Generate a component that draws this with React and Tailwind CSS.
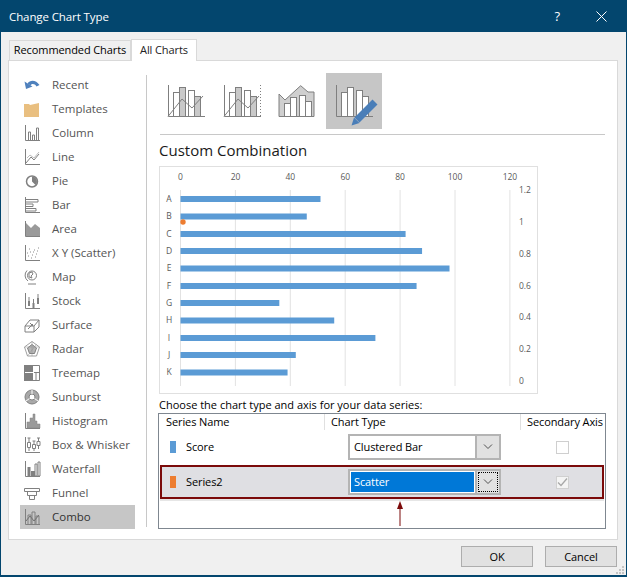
const axis = <path d="M1.5 0v15.5H16" fill="none" stroke="#808080" />;

const navItems = [
  {
    name: "Recent",
    icon: (
      <>
        <path d="M3.500 6.500C6 2.500 12 2.500 15.500 8l-3 1.500C10.500 6.500 8 6.500 6.500 8.500z" fill="#4f81bd" />
        <path d="M0.500 4.500l1.500 7.500 6.500-2.500z" fill="#4f81bd" />
      </>
    ),
  },
  {
    name: "Templates",
    icon: <path d="M0 3h5l1 1 9-2v14H0z" fill="#e9bf80" />,
  },
  {
    name: "Column",
    icon: (
      <>
        {axis}
        <path d="M4.500 15V7h2v8M8.500 15v-5h2v5M12.500 15V3h2v12" fill="none" stroke="#808080" />
      </>
    ),
  },
  {
    name: "Line",
    icon: (
      <>
        {axis}
        <path d="M2 14l5-6 3 3 5-6" fill="none" stroke="#808080" />
        <path d="M3 9l3-3 4 3 5-6" fill="none" stroke="#bdbdbd" />
      </>
    ),
  },
  {
    name: "Pie",
    icon: (
      <>
        <circle cx="8" cy="8.500" r="5.500" fill="none" stroke="#808080" strokeWidth="1.500" />
        <path d="M8 3.500v5l3.500 3.500a5 5 0 0 0-3.500-8.500z" fill="#808080" />
      </>
    ),
  },
  {
    name: "Bar",
    icon: (
      <>
        {axis}
        <path d="M2 2.500h12v2.500H2M2 7h7v2.500H2M2 11.500h10V14H2" fill="none" stroke="#808080" />
      </>
    ),
  },
  {
    name: "Area",
    icon: (
      <>
        {axis}
        <path d="M2 2l5 5 4-4 5 4v8H2z" fill="#9a9a9a" />
      </>
    ),
  },
  {
    name: "X Y (Scatter)",
    icon: (
      <>
        {axis}
        <path
          d="M4 11h1M6 7h1M8 10h1M10 5h1M12 9h1M14 3h1M7 13h1M11 12h1M5 4h1M13 6h1M9 7h1M3 8h1"
          stroke="#8a8a8a"
        />
      </>
    ),
  },
  {
    name: "Map",
    icon: (
      <>
        <circle cx="8" cy="6.500" r="4.500" fill="none" stroke="#808080" />
        <path d="M5 4l3-1 1 2-2 2 1 2-3-1zM3 1.500a7 7 0 0 0 1 10.500M4 15h8" fill="none" stroke="#808080" />
      </>
    ),
  },
  {
    name: "Stock",
    icon: (
      <>
        {axis}
        <path d="M5 4v8M9.500 6v9M14 1v10" stroke="#808080" />
        <path d="M4 8h2v5H4zM8.500 10h2v5h-2zM13 5h2v6h-2z" fill="#808080" />
      </>
    ),
  },
  {
    name: "Surface",
    icon: (
      <>
        <path d="M1 9l5-6h9v7l-5 5H1z" fill="none" stroke="#808080" />
        <path d="M1 9h9l5-6M10 9v6M4 12l5-5M6 6l3 3" fill="none" stroke="#808080" />
      </>
    ),
  },
  {
    name: "Radar",
    icon: (
      <>
        <path d="M8 0.500l7.500 5.500-3 9h-9l-3-9z" fill="none" stroke="#a0a0a0" />
        <path d="M8 3.500l4.500 3.500-2 5.500h-5L3.500 7z" fill="#b5b5b5" stroke="#808080" />
        <path d="M8 0.500V15M0.500 6l15 0M3.500 15L12.500 3" stroke="#909090" strokeWidth="0.500" />
      </>
    ),
  },
  {
    name: "Treemap",
    icon: (
      <>
        <path d="M0.500 0.500h15v15H0.500z" fill="none" stroke="#808080" />
        <path d="M0 0h9v7H0zM0 8h9v8H0z" fill="#808080" />
        <path d="M10 7.500h5M12 7.500V15" stroke="#808080" />
      </>
    ),
  },
  {
    name: "Sunburst",
    icon: (
      <>
        <circle cx="8" cy="8" r="7" fill="#a8a8a8" stroke="#808080" />
        <circle cx="8" cy="8" r="3" fill="#fff" stroke="#808080" />
        <path d="M8 1v4M2 12l3.500-2.500M14 12l-3.500-2.500" stroke="#fff" />
      </>
    ),
  },
  {
    name: "Histogram",
    icon: (
      <>
        {axis}
        <path d="M3 15V9h3V5h3V1h2v7h2v3h3v4z" fill="#9a9a9a" stroke="#808080" strokeWidth="0.500" />
      </>
    ),
  },
  {
    name: "Box & Whisker",
    icon: (
      <>
        {axis}
        <path d="M5 1v13M10 4v10M14.500 1v11M3.500 1h3M8.500 4h3M13 1h3" stroke="#808080" fill="none" />
        <path d="M3.500 5.500h3v5h-3zM8.500 7.500h3v4h-3zM13 4.500h3v4h-3z" fill="#fff" stroke="#808080" />
      </>
    ),
  },
  {
    name: "Waterfall",
    icon: (
      <>
        {axis}
        <path d="M3.500 6h3v9h-3zM7 10h4v5H7z" fill="#808080" />
        <path d="M11 3h2v12h-2zM14 1h2v14h-2z" fill="none" stroke="#808080" />
      </>
    ),
  },
  {
    name: "Funnel",
    icon: <path d="M0.500 3.500h15v3h-15zM3.500 6.500h9v4h-9zM5.500 10.500h5v4h-5z" fill="none" stroke="#808080" />,
  },
  {
    name: "Combo",
    icon: (
      <>
        {axis}
        <path d="M4 15V6h3v9M8 15V3h3v12M12 15V7h3v8" fill="none" stroke="#808080" />
        <path d="M2 12l4-5 4 5 5-6" fill="none" stroke="#707070" />
      </>
    ),
  },
];

const Bars = ({ items }) =>
  items.map(([x, y, h, gray], i) => (
    <rect key={i} x={x + 0.5} y={y + 0.5} width="6" height={43 - y} fill={gray ? "#c9c9c9" : "#fff"} stroke="#7f7f7f" />
  ));

const ChartAxis = ({ x2 = 47 }) => <path d={`M10.500 12v31.500H${x2}`} fill="none" stroke="#7f7f7f" />;

const subtypes = [
  <>
    <Bars items={[[15, 19], [21, 14, 0, true], [30, 17], [36, 23, 0, true]]} />
    <ChartAxis />
    <path d="M10 43.500L24 26l10 9 11-12" fill="none" stroke="#7f7f7f" />
  </>,
  <>
    <Bars items={[[15, 19], [21, 14, 0, true], [30, 17], [36, 23, 0, true]]} />
    <ChartAxis />
    <path d="M10 43.500L24 26l10 9 11-12" fill="none" stroke="#7f7f7f" />
    <path d="M46.500 12v31" stroke="#7f7f7f" strokeDasharray="1 2" />
  </>,
  <>
    <path d="M9 21l6 6L30.700 12.700 38 19h6v24.500H9z" fill="#cfcfcf" stroke="#7f7f7f" />
    <Bars items={[[14, 30], [20, 24], [29, 22], [35, 28]]} />
  </>,
  <>
    <Bars items={[[15, 19], [21, 14], [30, 17], [36, 23]]} />
    <ChartAxis />
    <path d="M31 47L49 29" stroke="#4a7eb8" strokeWidth="7" />
    <path d="M25.500 52.500l2.500-8 5.500 5.500z" fill="#4a7eb8" />
  </>,
];

const chartData = [
  ["A", 51, 199],
  ["B", 46, 216.5],
  ["C", 82, 234],
  ["D", 88, 251],
  ["E", 98, 268.5],
  ["F", 86, 286],
  ["G", 36, 303],
  ["H", 56, 320.5],
  ["I", 71, 338],
  ["J", 42, 355],
  ["K", 39, 372.5],
];

const rightAxis = [
  ["1.2", 190],
  ["1", 222],
  ["0.8", 253.5],
  ["0.6", 285.5],
  ["0.4", 317],
  ["0.2", 349],
  ["0", 381],
];

// inside of the chart box starts at 160,167 in window coordinates
const Chart = () => (
  <svg width="377" height="226" viewBox="160 167 377 226" className="block">
    {[0, 20, 40, 60, 80, 100, 120].map((v) => {
      const x = 180.5 + v * 2.745;
      return (
        <g key={v}>
          <line x1={x} x2={x} y1="190" y2="386" stroke="#e2e2e2" />
          <text x={x} y="180" textAnchor="middle" fontSize="8.500" fill="#595959">
            {v}
          </text>
        </g>
      );
    })}
    {chartData.map(([label, value, y]) => (
      <g key={label}>
        <rect x="180.500" y={y - 3} width={value * 2.745} height="6" fill="#5b9bd5" />
        <text x="169" y={y + 2.5} textAnchor="middle" fontSize="8.500" fill="#595959">
          {label}
        </text>
      </g>
    ))}
    <circle cx="183" cy="222" r="2.700" fill="#ed7d31" />
    {rightAxis.map(([label, y]) => (
      <text key={label} x="519" y={y + 3} fontSize="8.500" fill="#595959">
        {label}
      </text>
    ))}
  </svg>
);

const Chevron = () => (
  <svg width="10" height="6" viewBox="0 0 10 6">
    <path d="M1 0.500l4 4 4-4" fill="none" stroke="#505050" />
  </svg>
);

const Combo = ({ value, focused }) => (
  <div className="flex w-[153px] h-[26px] border-2 border-[#b4b4b4] bg-white">
    <div className="flex-1 flex items-stretch p-[1px]">
      <div className={`flex-1 flex items-center pl-[3px] ${focused ? "bg-[#0078d7] text-white" : "text-black"}`}>{value}</div>
    </div>
    <div className="w-[24px] bg-[#e1e1e1] border-l-2 border-[#b4b4b4] flex items-center justify-center p-[1px]">
      <div className={`w-full h-full flex items-center justify-center ${focused ? "border border-dotted border-black" : ""}`}>
        <Chevron />
      </div>
    </div>
  </div>
);

const SeriesRow = ({ color, name, chart, focused, checked }) => (
  <div className={`flex items-center mx-[1px] h-[34px] ${focused ? "border-2 border-[#7b0a0a] bg-[#dfdfe3] shadow-[0_2px_0_#e6e6e6]" : ""}`}>
    <div className={`w-[6px] h-[12px] ${focused ? "ml-[8px]" : "ml-[10px]"}`} style={{ backgroundColor: color }} />
    <div className="ml-[10px] w-[162px]">{name}</div>
    <Combo value={chart} focused={focused} />
    <div className={`ml-[55px] w-[13px] h-[13px] border flex items-center justify-center ${focused ? "bg-[#f4f4f4] border-[#d0d0d0]" : "border-[#cfcfcf]"}`}>
      {checked && (
        <svg width="11" height="9" viewBox="0 0 11 9">
          <path d="M1 4.500l3 3 6-7" fill="none" stroke="#a8a8a8" strokeWidth="1.300" />
        </svg>
      )}
    </div>
  </div>
);

const Button = ({ children }) => (
  <button className="w-[72px] h-[21px] bg-[#e1e1e1] border border-[#adadad] text-[11px] leading-none text-black">
    {children}
  </button>
);

export default function App() {
  return (
    <div
      className="relative w-[627px] h-[577px] flex flex-col bg-[#f0f0f0] border-x border-b-2 border-[#03466e] overflow-hidden text-[11px] tracking-[-0.1px] text-black"
      style={{ fontFamily: '"Open Sans", "Noto Sans", sans-serif' }}
    >
      <div className="h-[32px] shrink-0 bg-[#03466e] text-white flex items-center pt-[1px] pl-[8px] pr-[19px]">
        <span className="text-[11.500px]">Change Chart Type</span>
        <span className="ml-auto text-[13px]">?</span>
        <svg className="ml-[36px]" width="11" height="11" viewBox="0 0 11 11">
          <path d="M0.500 0.500l10 10M10.500 0.500l-10 10" stroke="#fff" />
        </svg>
      </div>

      <div className="flex items-end h-[28px] pl-[8px]">
        <div className="h-[20px] w-[122px] border border-b-0 border-[#d9d9d9] bg-[#f0f0f0] flex items-center justify-center whitespace-nowrap text-[11px]">
          Recommended Charts
        </div>
        <div className="relative -mb-[1px] h-[22px] w-[66px] border border-b-0 border-[#d9d9d9] bg-white flex items-center justify-center text-[11px] text-[#222] z-10">
          All Charts
        </div>
      </div>

      <div className="ml-[7px] w-[610px] h-[480px] bg-white border border-[#d9d9d9] flex">
        <div className="w-[137px] shrink-0 pl-[11px] pt-[12px]">
          {navItems.map((item) => (
            <div
              key={item.name}
              className={`h-[24px] w-[115px] flex items-center pl-[4px] text-[11.500px] tracking-normal ${
                item.name === "Combo" ? "bg-[#c6c6c6] text-[#333]" : "text-[#555]"
              }`}
            >
              <svg width="16" height="16" viewBox="0 0 16 16" className="shrink-0 overflow-visible">
                {item.icon}
              </svg>
              <span className="ml-[12px] whitespace-nowrap">{item.name}</span>
            </div>
          ))}
        </div>

        <div className="mt-[14px] h-[452px] w-[1px] bg-[#c8c8c8] shrink-0" />

        <div className="relative pl-[11px] pt-[12px] flex-1">
          <div className="flex">
            {subtypes.map((icon, i) => (
              <div key={i} className={`w-[56px] h-[56px] ${i === 3 ? "bg-[#c6c6c6]" : ""}`}>
                <svg width="56" height="56" viewBox="0 0 56 56">
                  {icon}
                </svg>
              </div>
            ))}
          </div>
          <div className="mt-[5px] ml-[2px] w-[445px] h-[1px] bg-[#c8c8c8]" />
          <div className="mt-[5px] ml-[1px] h-[21px] text-[15px] tracking-normal leading-[21px] text-[#1a1a1a]">Custom Combination</div>
          <div className="mt-[5px] ml-[1px] w-[379px] h-[228px] border border-[#e0e0e0] overflow-hidden">
            <Chart />
          </div>
          <div className="mt-[2px] ml-[1px] h-[17px] leading-[17px] tracking-normal whitespace-nowrap">
            Choose the chart type and axis for your data series:
          </div>
          <div className="relative w-[448px] h-[116px] border border-[#7f8790] bg-white">
            <div className="h-[16px] flex items-center">
              <div className="pl-[7px] w-[166px] h-full border-r border-[#e0e0e0] leading-[16px]">Series Name</div>
              <div className="pl-[6px] w-[196px] h-full border-r border-[#e0e0e0] leading-[16px]">Chart Type</div>
              <div className="pl-[6px] whitespace-nowrap leading-[16px]">Secondary Axis</div>
            </div>
            <SeriesRow color="#5b9bd5" name="Score" chart="Clustered Bar" />
            <div className="mt-[1px]">
              <SeriesRow color="#ed7d31" name="Series2" chart="Scatter" focused checked />
            </div>
            <svg className="absolute left-[236px] top-[87px]" width="10" height="25" viewBox="0 0 10 25">
              <path d="M5 0l-3 8h6z" fill="#7b0a0a" />
              <path d="M5 6v19" stroke="#7b0a0a" />
            </svg>
          </div>
        </div>
      </div>

      <div className="flex justify-end gap-[12px] pt-[6px] pr-[9px]">
        <Button>OK</Button>
        <Button>Cancel</Button>
      </div>

      <svg className="absolute right-[2px] bottom-[1px]" width="8" height="8" viewBox="0 0 8 8">
        <path d="M6 0h2v2H6zM3 3h2v2H3zM6 3h2v2H6zM0 6h2v2H0zM3 6h2v2H3zM6 6h2v2H6z" fill="#c4c4c4" />
      </svg>
    </div>
  );
}
